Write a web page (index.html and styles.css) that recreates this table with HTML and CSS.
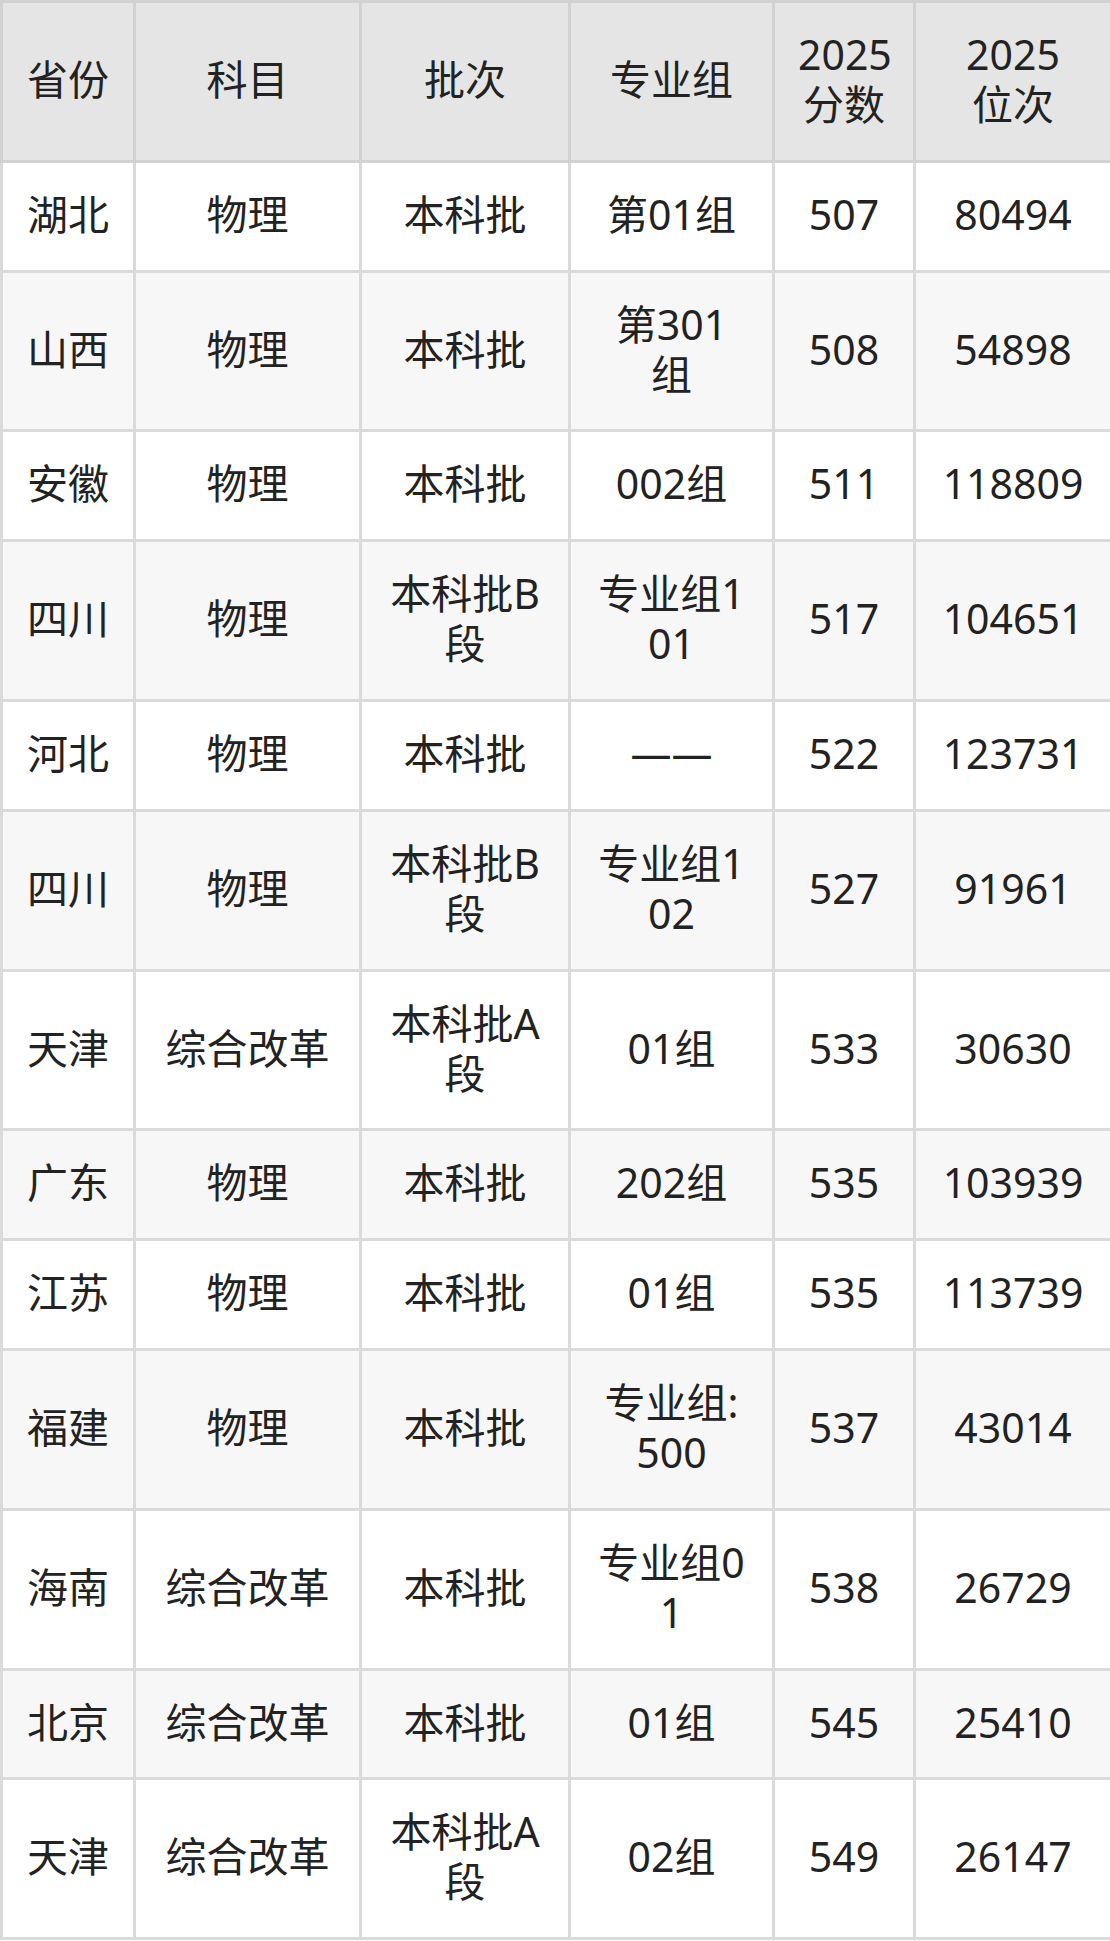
FILE: index.html
```html
<!DOCTYPE html>
<html lang="zh-CN">
<head>
<meta charset="utf-8">
<title>分数线</title>
<link rel="stylesheet" href="styles.css">
</head>
<body>
<table class="score-table">
  <colgroup>
    <col class="c-prov">
    <col class="c-subj">
    <col class="c-batch">
    <col class="c-group">
    <col class="c-score">
    <col class="c-rank">
  </colgroup>
  <thead>
    <tr>
      <th>省份</th>
      <th>科目</th>
      <th>批次</th>
      <th class="group">专业组</th>
      <th>2025<br>分数</th>
      <th>2025<br>位次</th>
    </tr>
  </thead>
  <tbody>
    <tr><td>湖北</td><td>物理</td><td>本科批</td><td class="group">第01组</td><td>507</td><td>80494</td></tr>
    <tr><td>山西</td><td>物理</td><td>本科批</td><td class="group">第301组</td><td>508</td><td>54898</td></tr>
    <tr><td>安徽</td><td>物理</td><td>本科批</td><td class="group">002组</td><td>511</td><td>118809</td></tr>
    <tr><td>四川</td><td>物理</td><td>本科批B段</td><td class="group">专业组101</td><td>517</td><td>104651</td></tr>
    <tr><td>河北</td><td>物理</td><td>本科批</td><td class="group">——</td><td>522</td><td>123731</td></tr>
    <tr><td>四川</td><td>物理</td><td>本科批B段</td><td class="group">专业组102</td><td>527</td><td>91961</td></tr>
    <tr><td>天津</td><td>综合改革</td><td>本科批A段</td><td class="group">01组</td><td>533</td><td>30630</td></tr>
    <tr><td>广东</td><td>物理</td><td>本科批</td><td class="group">202组</td><td>535</td><td>103939</td></tr>
    <tr><td>江苏</td><td>物理</td><td>本科批</td><td class="group">01组</td><td>535</td><td>113739</td></tr>
    <tr><td>福建</td><td>物理</td><td>本科批</td><td class="group">专业组:500</td><td>537</td><td>43014</td></tr>
    <tr><td>海南</td><td>综合改革</td><td>本科批</td><td class="group">专业组01</td><td>538</td><td>26729</td></tr>
    <tr><td>北京</td><td>综合改革</td><td>本科批</td><td class="group">01组</td><td>545</td><td>25410</td></tr>
    <tr><td>天津</td><td>综合改革</td><td>本科批A段</td><td class="group">02组</td><td>549</td><td>26147</td></tr>
  </tbody>
</table>
</body>
</html>
```
FILE: styles.css
```css
html, body {
  margin: 0;
  padding: 0;
  background: #ffffff;
}

.score-table {
  width: 1110px;
  table-layout: fixed;
  border-collapse: collapse;
  font-family: "Noto Sans", "Noto Sans CJK SC", sans-serif;
  font-size: 41px;
  line-height: 50px;
  color: #222222;
}

.c-prov { width: 133px; }
.c-subj { width: 226px; }
.c-batch { width: 209px; }
.c-group { width: 204px; }
.c-score { width: 141px; }
.c-rank { width: 197px; }

.score-table th,
.score-table td {
  border: 3px solid #dadada;
  padding: 26px 23px 30.8px;
  text-align: center;
  vertical-align: middle;
  font-weight: normal;
}

.score-table td {
  word-break: break-all;
}

.score-table .group {
  padding-left: 26px;
  padding-right: 26px;
}

.score-table thead th {
  background: #e5e5e5;
  border-color: #d2d2d2;
}

.score-table tbody tr:nth-child(odd) td {
  background: #ffffff;
}

.score-table tbody tr:nth-child(even) td {
  background: #f7f7f7;
}
```
